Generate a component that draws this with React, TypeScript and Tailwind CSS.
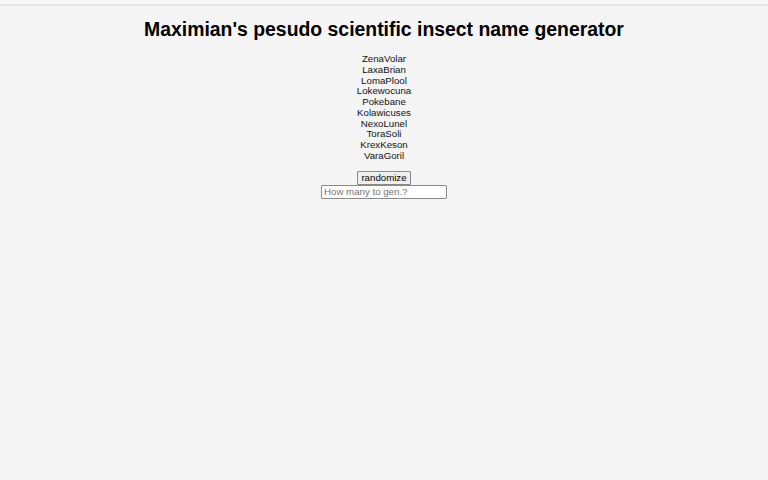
const names = [
  'ZenaVolar',
  'LaxaBrian',
  'LomaPlool',
  'Lokewocuna',
  'Pokebane',
  'Kolawicuses',
  'NexoLunel',
  'ToraSoli',
  'KrexKeson',
  'VaraGoril',
];

export default function App() {
  return (
    <div
      className="min-h-[480px] bg-[#f5f5f5] text-black"
      style={{ fontFamily: '"Liberation Sans", Arial, sans-serif' }}
    >
      <div className="h-[6px] border-b-2 border-[#e4e4e4] bg-[#f8f8f8]" />
      <h1 className="mt-[11px] text-center text-[19.4px] font-bold leading-[24px]">
        Maximian's pesudo scientific insect name generator
      </h1>
      <div className="mt-[13px] flex flex-col items-center text-[9.7px] leading-[10.75px] text-[#111]">
        {names.map(n => (
          <div key={n}>{n}</div>
        ))}
      </div>
      <div className="mt-[9px] flex flex-col items-center">
        <button className="h-[14px] border border-[#8a8a8a] bg-[#efefef] px-[3px] text-[9.7px] leading-[12px] rounded-[1px]">
          randomize
        </button>
        <input
          className="h-[14px] w-[126px] border border-[#8a8a8a] bg-white px-[2px] text-[9.7px] leading-[12px] rounded-[1px] placeholder:text-[#757575] outline-none"
          placeholder="How many to gen.?"
        />
      </div>
    </div>
  );
}
